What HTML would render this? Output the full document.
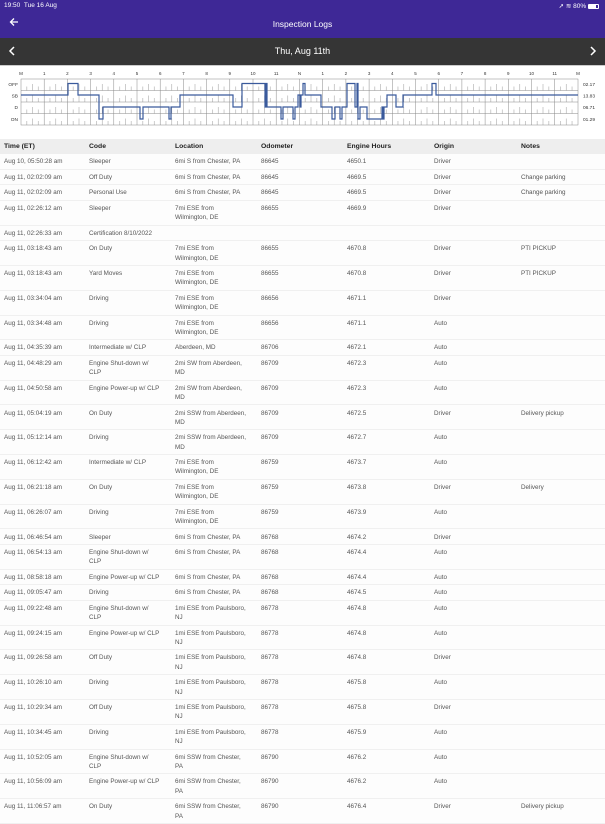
<!DOCTYPE html>
<html><head><meta charset="utf-8"><style>
*{margin:0;padding:0;box-sizing:border-box}
body{width:605px;height:806px;overflow:hidden;background:#fff;font-family:"Liberation Sans",Arial,sans-serif;position:relative}
.status{position:absolute;left:0;top:0;width:605px;height:38px;background:#3e2896;color:#fff}
.status .t{position:absolute;left:4px;top:2px;font-size:6.5px}
.status .r{position:absolute;right:6px;top:2px;font-size:6.5px}
.title{position:absolute;top:19px;width:100%;text-align:center;font-size:8.5px}
.back{position:absolute;left:9px;top:17px}
.datebar{position:absolute;left:0;top:38px;width:605px;height:27px;background:#353535;color:#fff}
.datebar .d{position:absolute;top:8px;width:100%;text-align:center;font-size:9px}
.line65{position:absolute;top:65px;left:0;width:605px;height:1px;background:#ccc}
svg.chart{position:absolute;left:0;top:65px}
.tbl{position:absolute;left:0;top:139px;width:605px}
.row{display:flex;font-size:6.3px;color:#555;line-height:9.3px;padding:3.1px 0;border-bottom:1px solid #f0f0f0;background:#fdfdfd;height:15.5px}
.row.d{height:24.8px}
.row.h{background:#eee;color:#222;font-weight:bold;font-size:6.8px;height:15.4px;border:none}
.row div{white-space:nowrap;overflow:hidden}
.c1{margin-left:4px;width:85px}
.c2{width:86px}.c3{width:86px}.c4{width:86px}.c5{width:87px}.c6{width:87px}.c7{width:80px}
</style></head><body>
<div class="status"><span class="t">19:50 &nbsp;Tue 16 Aug</span><span class="r">➚ ≋ 80% <span style="display:inline-block;width:11px;height:5px;border:1px solid #fff;border-radius:1px;vertical-align:-0.5px;background:linear-gradient(90deg,#fff 80%,transparent 80%)"></span></span>
<svg class="back" width="10" height="10" viewBox="0 0 10 10"><path d="M9 5H1.5M5 1.5L1.5 5L5 8.5" stroke="#fff" stroke-width="1.3" fill="none"/></svg>
<div class="title">Inspection Logs</div></div>
<div class="datebar"><svg style="position:absolute;left:8px;top:8px" width="8" height="10"><path d="M6 1L2 5L6 9" stroke="#fff" stroke-width="1.5" fill="none"/></svg><div class="d">Thu, Aug 11th</div><svg style="position:absolute;left:589px;top:8px" width="8" height="10"><path d="M2 1L6 5L2 9" stroke="#fff" stroke-width="1.5" fill="none"/></svg></div>
<div class="line65"></div>
<svg class="chart" width="605" height="74" viewBox="0 65 605 74">
<defs><pattern id="tk" x="21" y="79" width="23.2" height="11.5" patternUnits="userSpaceOnUse">
<path d="M5.8 7.5V11.5M11.6 5V11.5M17.4 7.5V11.5" stroke="#999" stroke-width="0.5"/></pattern></defs>
<rect x="21" y="79" width="557" height="46" fill="url(#tk)"/>
<g stroke="#888" stroke-width="0.5" fill="none">
<rect x="21" y="79" width="557" height="46"/>
<path d="M21 90.5H578M21 102H578M21 113.5H578"/>
<path d="M44.2 79V125M67.4 79V125M90.6 79V125M113.8 79V125M137 79V125M160.2 79V125M183.4 79V125M206.6 79V125M229.8 79V125M253 79V125M276.2 79V125M299.5 79V125M322.7 79V125M345.9 79V125M369.1 79V125M392.3 79V125M415.5 79V125M438.7 79V125M461.9 79V125M485.1 79V125M508.3 79V125M531.5 79V125M554.7 79V125"/>
</g>
<g font-size="4.5" fill="#333" text-anchor="middle" font-family="Liberation Sans,sans-serif">
<text x="21" y="75">M</text><text x="44.2" y="75">1</text><text x="67.4" y="75">2</text><text x="90.6" y="75">3</text><text x="113.8" y="75">4</text><text x="137" y="75">5</text><text x="160.2" y="75">6</text><text x="183.4" y="75">7</text><text x="206.6" y="75">8</text><text x="229.8" y="75">9</text><text x="253" y="75">10</text><text x="276.2" y="75">11</text><text x="299.5" y="75">N</text><text x="322.7" y="75">1</text><text x="345.9" y="75">2</text><text x="369.1" y="75">3</text><text x="392.3" y="75">4</text><text x="415.5" y="75">5</text><text x="438.7" y="75">6</text><text x="461.9" y="75">7</text><text x="485.1" y="75">8</text><text x="508.3" y="75">9</text><text x="531.5" y="75">10</text><text x="554.7" y="75">11</text><text x="578" y="75">M</text>
</g>
<g font-size="4.8" fill="#333" font-family="Liberation Sans,sans-serif">
<text x="18" y="86" text-anchor="end">OFF</text><text x="18" y="97.5" text-anchor="end">SB</text><text x="18" y="109" text-anchor="end">D</text><text x="18" y="121" text-anchor="end">ON</text>
<text x="583" y="86">02.17</text><text x="583" y="97.5">13.83</text><text x="583" y="109">06.71</text><text x="583" y="121">01.29</text>
</g>
<path d="M21 95H68V83.5H78V95H99V119H103V107H140V119H143V107H169V119H171V107H180V95H233V107H242V83.5H265V107H266V83.5H267V107H281V119H283V107H293V119H295V107H298V95H300V107H301V95H303V83.5H305V95H321V107H332V119H335V107H340V119H342V107H347V83.5H355V107H357V83.5H358V119H360V107H367V119H382V107H383V119H384V107H387V95H396V107H403V95H432V83.5H436V95H578" stroke="#3a5a9c" stroke-width="1.2" fill="none"/>
</svg>
<div class="tbl">
<div class="row h"><div class="c1">Time (ET)</div><div class="c2">Code</div><div class="c3">Location</div><div class="c4">Odometer</div><div class="c5">Engine Hours</div><div class="c6">Origin</div><div class="c7">Notes</div></div>
<div class="row"><div class="c1">Aug 10, 05:50:28 am</div><div class="c2">Sleeper</div><div class="c3">6mi S from Chester, PA</div><div class="c4">86645</div><div class="c5">4650.1</div><div class="c6">Driver</div><div class="c7"></div></div>
<div class="row"><div class="c1">Aug 11, 02:02:09 am</div><div class="c2">Off Duty</div><div class="c3">6mi S from Chester, PA</div><div class="c4">86645</div><div class="c5">4669.5</div><div class="c6">Driver</div><div class="c7">Change parking</div></div>
<div class="row"><div class="c1">Aug 11, 02:02:09 am</div><div class="c2">Personal Use</div><div class="c3">6mi S from Chester, PA</div><div class="c4">86645</div><div class="c5">4669.5</div><div class="c6">Driver</div><div class="c7">Change parking</div></div>
<div class="row d"><div class="c1">Aug 11, 02:26:12 am</div><div class="c2">Sleeper</div><div class="c3">7mi ESE from<br>Wilmington, DE</div><div class="c4">86655</div><div class="c5">4669.9</div><div class="c6">Driver</div><div class="c7"></div></div>
<div class="row"><div class="c1">Aug 11, 02:26:33 am</div><div class="c2" style="overflow:visible">Certification 8/10/2022</div><div class="c3"></div><div class="c4"></div><div class="c5"></div><div class="c6"></div><div class="c7"></div></div>
<div class="row d"><div class="c1">Aug 11, 03:18:43 am</div><div class="c2">On Duty</div><div class="c3">7mi ESE from<br>Wilmington, DE</div><div class="c4">86655</div><div class="c5">4670.8</div><div class="c6">Driver</div><div class="c7">PTI PICKUP</div></div>
<div class="row d"><div class="c1">Aug 11, 03:18:43 am</div><div class="c2">Yard Moves</div><div class="c3">7mi ESE from<br>Wilmington, DE</div><div class="c4">86655</div><div class="c5">4670.8</div><div class="c6">Driver</div><div class="c7">PTI PICKUP</div></div>
<div class="row d"><div class="c1">Aug 11, 03:34:04 am</div><div class="c2">Driving</div><div class="c3">7mi ESE from<br>Wilmington, DE</div><div class="c4">86656</div><div class="c5">4671.1</div><div class="c6">Driver</div><div class="c7"></div></div>
<div class="row d"><div class="c1">Aug 11, 03:34:48 am</div><div class="c2">Driving</div><div class="c3">7mi ESE from<br>Wilmington, DE</div><div class="c4">86656</div><div class="c5">4671.1</div><div class="c6">Auto</div><div class="c7"></div></div>
<div class="row"><div class="c1">Aug 11, 04:35:39 am</div><div class="c2">Intermediate w/ CLP</div><div class="c3">Aberdeen, MD</div><div class="c4">86706</div><div class="c5">4672.1</div><div class="c6">Auto</div><div class="c7"></div></div>
<div class="row d"><div class="c1">Aug 11, 04:48:29 am</div><div class="c2">Engine Shut-down w/<br>CLP</div><div class="c3">2mi SW from Aberdeen,<br>MD</div><div class="c4">86709</div><div class="c5">4672.3</div><div class="c6">Auto</div><div class="c7"></div></div>
<div class="row d"><div class="c1">Aug 11, 04:50:58 am</div><div class="c2">Engine Power-up w/ CLP</div><div class="c3">2mi SW from Aberdeen,<br>MD</div><div class="c4">86709</div><div class="c5">4672.3</div><div class="c6">Auto</div><div class="c7"></div></div>
<div class="row d"><div class="c1">Aug 11, 05:04:19 am</div><div class="c2">On Duty</div><div class="c3">2mi SSW from Aberdeen,<br>MD</div><div class="c4">86709</div><div class="c5">4672.5</div><div class="c6">Driver</div><div class="c7">Delivery pickup</div></div>
<div class="row d"><div class="c1">Aug 11, 05:12:14 am</div><div class="c2">Driving</div><div class="c3">2mi SSW from Aberdeen,<br>MD</div><div class="c4">86709</div><div class="c5">4672.7</div><div class="c6">Auto</div><div class="c7"></div></div>
<div class="row d"><div class="c1">Aug 11, 06:12:42 am</div><div class="c2">Intermediate w/ CLP</div><div class="c3">7mi ESE from<br>Wilmington, DE</div><div class="c4">86759</div><div class="c5">4673.7</div><div class="c6">Auto</div><div class="c7"></div></div>
<div class="row d"><div class="c1">Aug 11, 06:21:18 am</div><div class="c2">On Duty</div><div class="c3">7mi ESE from<br>Wilmington, DE</div><div class="c4">86759</div><div class="c5">4673.8</div><div class="c6">Driver</div><div class="c7">Delivery</div></div>
<div class="row d"><div class="c1">Aug 11, 06:26:07 am</div><div class="c2">Driving</div><div class="c3">7mi ESE from<br>Wilmington, DE</div><div class="c4">86759</div><div class="c5">4673.9</div><div class="c6">Auto</div><div class="c7"></div></div>
<div class="row"><div class="c1">Aug 11, 06:46:54 am</div><div class="c2">Sleeper</div><div class="c3">6mi S from Chester, PA</div><div class="c4">86768</div><div class="c5">4674.2</div><div class="c6">Driver</div><div class="c7"></div></div>
<div class="row d"><div class="c1">Aug 11, 06:54:13 am</div><div class="c2">Engine Shut-down w/<br>CLP</div><div class="c3">6mi S from Chester, PA</div><div class="c4">86768</div><div class="c5">4674.4</div><div class="c6">Auto</div><div class="c7"></div></div>
<div class="row"><div class="c1">Aug 11, 08:58:18 am</div><div class="c2">Engine Power-up w/ CLP</div><div class="c3">6mi S from Chester, PA</div><div class="c4">86768</div><div class="c5">4674.4</div><div class="c6">Auto</div><div class="c7"></div></div>
<div class="row"><div class="c1">Aug 11, 09:05:47 am</div><div class="c2">Driving</div><div class="c3">6mi S from Chester, PA</div><div class="c4">86768</div><div class="c5">4674.5</div><div class="c6">Auto</div><div class="c7"></div></div>
<div class="row d"><div class="c1">Aug 11, 09:22:48 am</div><div class="c2">Engine Shut-down w/<br>CLP</div><div class="c3">1mi ESE from Paulsboro,<br>NJ</div><div class="c4">86778</div><div class="c5">4674.8</div><div class="c6">Auto</div><div class="c7"></div></div>
<div class="row d"><div class="c1">Aug 11, 09:24:15 am</div><div class="c2">Engine Power-up w/ CLP</div><div class="c3">1mi ESE from Paulsboro,<br>NJ</div><div class="c4">86778</div><div class="c5">4674.8</div><div class="c6">Auto</div><div class="c7"></div></div>
<div class="row d"><div class="c1">Aug 11, 09:26:58 am</div><div class="c2">Off Duty</div><div class="c3">1mi ESE from Paulsboro,<br>NJ</div><div class="c4">86778</div><div class="c5">4674.8</div><div class="c6">Driver</div><div class="c7"></div></div>
<div class="row d"><div class="c1">Aug 11, 10:26:10 am</div><div class="c2">Driving</div><div class="c3">1mi ESE from Paulsboro,<br>NJ</div><div class="c4">86778</div><div class="c5">4675.8</div><div class="c6">Auto</div><div class="c7"></div></div>
<div class="row d"><div class="c1">Aug 11, 10:29:34 am</div><div class="c2">Off Duty</div><div class="c3">1mi ESE from Paulsboro,<br>NJ</div><div class="c4">86778</div><div class="c5">4675.8</div><div class="c6">Driver</div><div class="c7"></div></div>
<div class="row d"><div class="c1">Aug 11, 10:34:45 am</div><div class="c2">Driving</div><div class="c3">1mi ESE from Paulsboro,<br>NJ</div><div class="c4">86778</div><div class="c5">4675.9</div><div class="c6">Auto</div><div class="c7"></div></div>
<div class="row d"><div class="c1">Aug 11, 10:52:05 am</div><div class="c2">Engine Shut-down w/<br>CLP</div><div class="c3">6mi SSW from Chester,<br>PA</div><div class="c4">86790</div><div class="c5">4676.2</div><div class="c6">Auto</div><div class="c7"></div></div>
<div class="row d"><div class="c1">Aug 11, 10:56:09 am</div><div class="c2">Engine Power-up w/ CLP</div><div class="c3">6mi SSW from Chester,<br>PA</div><div class="c4">86790</div><div class="c5">4676.2</div><div class="c6">Auto</div><div class="c7"></div></div>
<div class="row d"><div class="c1">Aug 11, 11:06:57 am</div><div class="c2">On Duty</div><div class="c3">6mi SSW from Chester,<br>PA</div><div class="c4">86790</div><div class="c5">4676.4</div><div class="c6">Driver</div><div class="c7">Delivery pickup</div></div>
</div>
</body></html>
